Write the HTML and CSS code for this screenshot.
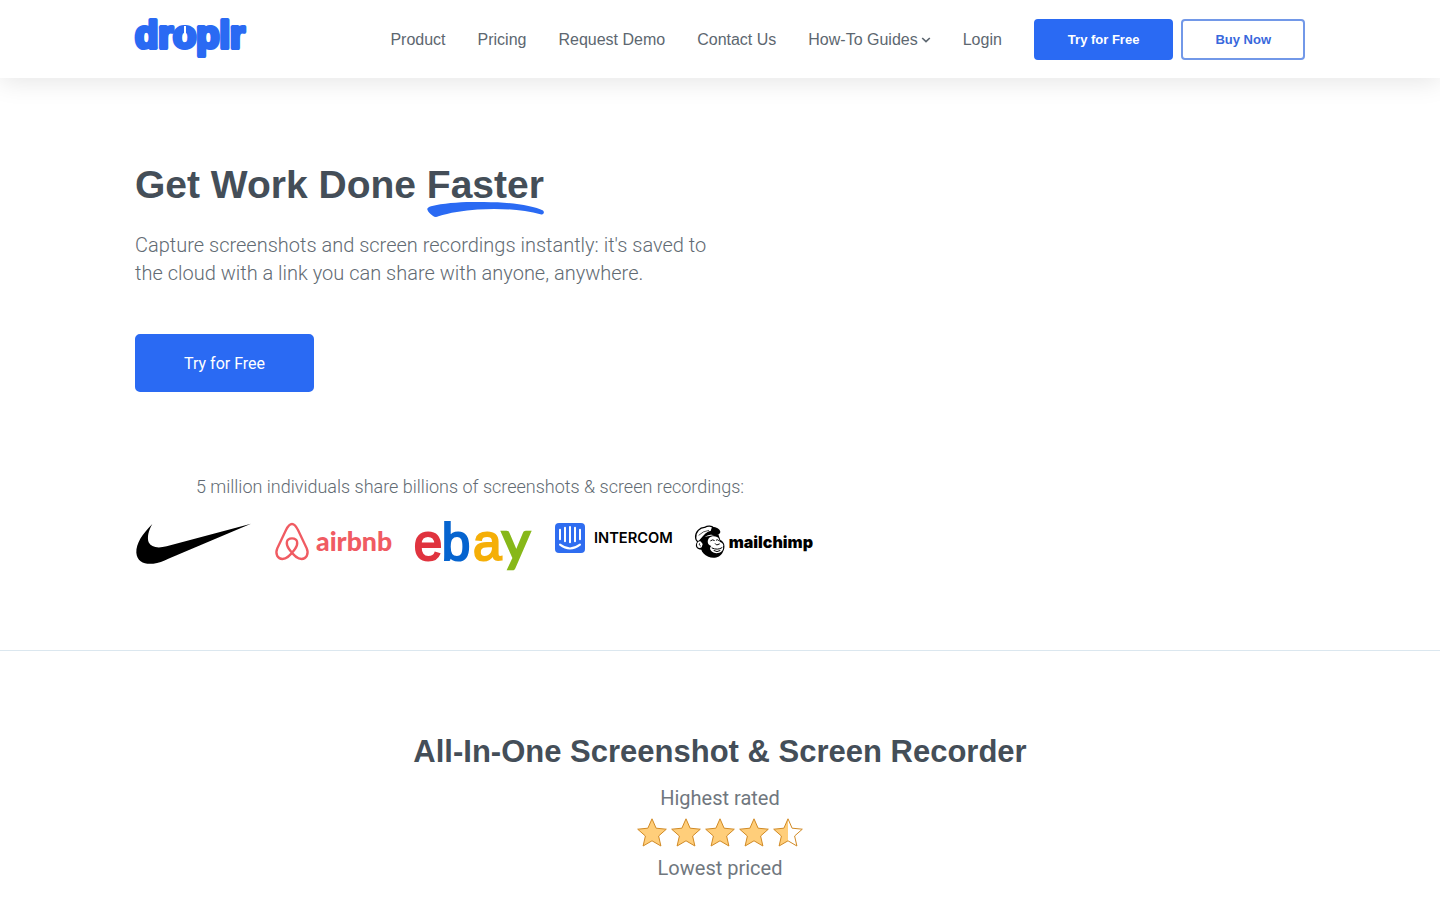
FILE: index.html
```html
<!DOCTYPE html>
<html lang="en">
<head>
<meta charset="utf-8">
<meta name="viewport" content="width=device-width, initial-scale=1">
<title>Droplr</title>
<link rel="stylesheet" href="styles.css">
</head>
<body>
<header class="site-header">
  <div class="container header-row">
    <a class="brand" href="#" aria-label="droplr">
      <svg width="120" height="52" viewBox="0 -6 120 52">
        <text class="brand-text" x="0" y="29">droplr</text>
        <path d="M50 7v12" stroke="#fff" stroke-width="2"/>
      </svg>
    </a>
    <nav class="nav">
      <a href="#">Product</a>
      <a href="#">Pricing</a>
      <a href="#">Request Demo</a>
      <a href="#">Contact Us</a>
      <a class="nav-menu" href="#">How-To Guides
        <svg width="10" height="6" viewBox="0 0 10 6"><path d="M1.2 1L5 4.6 8.8 1" fill="none" stroke="currentColor" stroke-width="1.7"/></svg>
      </a>
      <a href="#">Login</a>
      <div class="nav-actions">
        <button class="btn btn-primary" type="button">Try for Free</button>
        <button class="btn btn-outline" type="button">Buy Now</button>
      </div>
    </nav>
  </div>
</header>
<main>
  <section class="hero">
    <div class="container">
      <h1 class="hero-title">Get Work Done <span class="marked">Faster<svg class="swoosh" viewBox="0 0 348 46" preserveAspectRatio="none"><path d="M1 23C0 18 5 15 12 13C70-2 150-1 210 1C265 4 320 13 345 26C350 31 347 39 340 38C280 22 215 19 150 23C110 26 65 33 34 44C27 47 22 46 17 42C9 36 3 30 1 23Z" fill="#2a6af3"/></svg></span></h1>
      <p class="hero-lead">Capture screenshots and screen recordings instantly: it's saved to the cloud with a link you can share with anyone, anywhere.</p>
      <button class="btn btn-primary btn-large" type="button">Try for Free</button>
      <div class="clients">
        <p class="clients-title">5 million individuals share billions of screenshots &amp; screen recordings:</p>
        <div class="client-logos">
          <svg viewBox="30 39 354 141" role="img" aria-label="Nike"><path d="M82 42C52 72 33 100 34 128C36 155 58 164 85 161C100 159 115 153 130 146L378 41L125 109C98 116 78 112 71 97C66 82 70 62 82 42Z"/></svg>
          <svg viewBox="30 39 354 141" role="img" aria-label="airbnb">
            <path d="M81 42C90 42 94 50 99 60L125 115C133 133 123 147 110 147C95 147 81 130 72 117C62 103 62 85 81 85C100 85 100 103 90 117C81 130 67 147 52 147C39 147 29 133 37 115L63 60C68 50 72 42 81 42Z" fill="none" stroke="#f05b62" stroke-width="7"/>
            <text class="logo-airbnb" x="153" y="122">airbnb</text>
          </svg>
          <svg viewBox="30 39 354 141" role="img" aria-label="ebay">
            <g class="logo-ebay">
              <text x="26" y="150" fill="#e0343f" stroke="#e0343f">e</text>
              <text x="110" y="150" fill="#0664cf" stroke="#0664cf">b</text>
              <text x="204" y="150" fill="#f5af08" stroke="#f5af08">a</text>
              <text class="ebay-y" x="290" y="150" fill="#87b819" stroke="#87b819">y</text>
            </g>
          </svg>
          <svg viewBox="30 39 354 141" role="img" aria-label="Intercom">
            <rect x="30" y="39" width="90" height="90" rx="12" fill="#2f6df0"/>
            <path d="M45 59V88M60 53V94M75 51V97M90 53V94M105 59V88M45 104Q75 127 105 104" fill="none" stroke="#fff" stroke-width="6" stroke-linecap="round"/>
            <text class="logo-intercom" x="147" y="99">INTERCOM</text>
          </svg>
          <svg viewBox="30 39 354 141" role="img" aria-label="mailchimp">
            <path d="M45 83L100 73L106 90C119 95 122 112 114 125C106 144 84 147 70 140C58 134 51 127 49 119C35 119 28 108 36 96Z"/>
            <path d="M32 84C30 67 45 51 60 52C68 46 81 48 85 53L80 65C70 67 56 77 45 91C40 98 33 94 32 84Z" fill="#fff" stroke="#000" stroke-width="4"/>
            <path d="M81 51C91 50 105 56 106 65C106 73 94 78 83 75C70 71 60 79 51 91C58 67 69 65 77 63Z"/>
            <path d="M50 98C45 90 36 95 36 104C36 113 43 116 50 112L53 102Z" fill="#fff"/>
            <path d="M44 100q-4 4 3 8" fill="none" stroke="#000" stroke-width="3"/>
            <path d="M72 84C80 76 99 78 102 87L104 95C114 98 117 104 114 110C118 124 99 133 87 128C75 123 72 114 79 108C68 105 65 94 72 84Z" fill="#fff"/>
            <path d="M77 92q6-5 11-1M94 90q4-3 7 1M91 101l4 4 8-3M81 114Q98 122 111 113M87 122q9 6 18 0" fill="none" stroke="#000" stroke-width="3" stroke-linecap="round"/>
            <path d="M41 76q13-13 31-15" fill="none" stroke="#000" stroke-width="2"/>
            <text class="logo-mailchimp" x="131" y="114">mailchimp</text>
          </svg>
        </div>
      </div>
    </div>
  </section>
  <section class="rating">
    <h2 class="rating-title">All-In-One Screenshot &amp; Screen Recorder</h2>
    <p class="rating-text">Highest rated</p>
    <svg class="stars" width="168" height="32" viewBox="0 0 168 32" role="img" aria-label="4.5 out of 5 stars">
      <defs>
        <path id="star" d="M16 1.8L20.1 11.2L30.3 12.2L22.6 19L24.9 29L16 23.8L7.1 29L9.4 19L1.7 12.2L11.9 11.2Z"/>
        <clipPath id="left-half"><rect width="16" height="32"/></clipPath>
      </defs>
      <g fill="#ffce7a" stroke="#d18a25" stroke-width="1">
        <use href="#star"/><use href="#star" x="34"/><use href="#star" x="68"/><use href="#star" x="102"/>
        <g transform="translate(136 0)"><use href="#star" stroke="none" clip-path="url(#left-half)"/><use href="#star" fill="none"/></g>
      </g>
    </svg>
    <p class="rating-text">Lowest priced</p>
  </section>
</main>
</body>
</html>
```
FILE: styles.css
```css
* { box-sizing: border-box; }
body {
  margin: 0;
  background: #fff;
  color: #444e58;
  font-family: "Liberation Sans", Arial, sans-serif;
}
h1, h2, p { margin: 0; }
a { color: inherit; text-decoration: none; }
.container {
  max-width: 1202px;
  margin: 0 auto;
  padding: 0 16px;
}
.site-header {
  position: relative;
  background: #fff;
  box-shadow: 0 4px 24px rgba(0, 0, 0, 0.1);
}
.header-row {
  display: flex;
  align-items: center;
  justify-content: space-between;
  min-height: 78px;
}
.brand svg { display: block; overflow: visible; }
.brand-text {
  font: 700 38px "Liberation Sans", Arial, sans-serif;
  fill: #2a6af3;
  stroke: #2a6af3;
  stroke-width: 4;
  stroke-linejoin: round;
}
.nav {
  display: flex;
  align-items: center;
  gap: 32px;
  color: #5d6770;
  font-size: 16px;
  line-height: 24px;
  white-space: nowrap;
}
.nav > a { padding-top: 2px; }
.nav-menu {
  display: flex;
  align-items: center;
  gap: 3px;
}
.nav-actions { display: flex; gap: 8px; }
.btn {
  border: 2px solid #2a6af3;
  border-radius: 4px;
  padding: 0 32px;
  font: 700 13px/37px "Liberation Sans", Arial, sans-serif;
  cursor: pointer;
}
.btn-primary { background: #2a6af3; color: #fff; }
.btn-outline { background: #fff; border-color: #7298e8; color: #3968dc; }
.btn-large {
  padding: 2px 47px 0;
  border-radius: 5px;
  font: 400 16px/52px Roboto, sans-serif;
}
.hero {
  padding: 83px 0 80px;
  border-bottom: 1px solid #dbe7ef;
}
.hero-title {
  margin-bottom: 22px;
  font-size: 39px;
  line-height: 48px;
}
.marked { position: relative; display: inline-block; }
.swoosh {
  position: absolute;
  left: 0;
  bottom: -8px;
  width: 100%;
  height: 15px;
}
.hero-lead {
  max-width: 580px;
  margin-bottom: 47px;
  color: #626b73;
  font: 300 20px/28px Roboto, sans-serif;
}
.clients {
  max-width: 678px;
  margin-top: 81px;
}
.clients-title {
  margin-bottom: 22px;
  padding-right: 8px;
  color: #626b73;
  font: 300 18px/28px Roboto, sans-serif;
  text-align: center;
}
.client-logos {
  display: grid;
  grid-template-columns: repeat(5, 1fr);
  gap: 22px;
}
.client-logos svg { display: block; width: 100%; overflow: visible; }
.logo-airbnb { font: 900 80px Lato, sans-serif; fill: #f05b62; }
.logo-ebay {
  font: 400 154px "Liberation Sans", Arial, sans-serif;
  stroke-width: 6;
}
.ebay-y { font: 400 165px Lato, sans-serif; stroke-width: 8; }
.logo-intercom { font: 600 44px Inter, sans-serif; }
.logo-mailchimp { font: 900 48px Inter, sans-serif; }
.rating {
  padding: 81px 16px 16px;
  text-align: center;
}
.rating-title {
  margin-bottom: 11px;
  font-size: 31px;
  line-height: 40px;
}
.rating-text {
  color: #70777e;
  font: 400 20px/30px Roboto, sans-serif;
}
.stars { display: block; margin: 4px auto; }
```
